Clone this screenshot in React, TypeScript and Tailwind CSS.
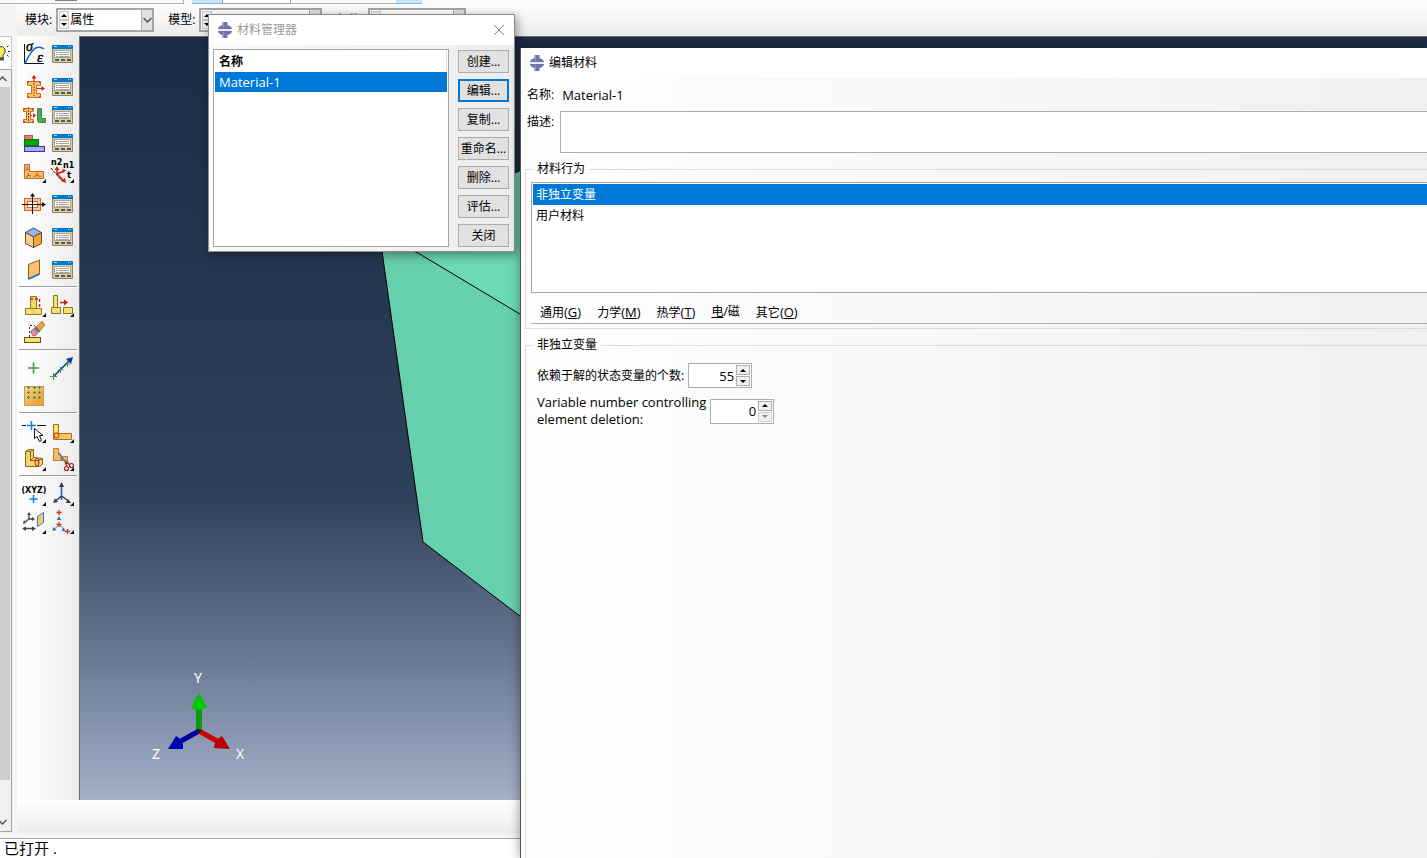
import React, { useState } from "react";

const BLUE = "#0d6cc8";

const Corner = () => <path d="M26 22v4h-4z" fill="#111" />;

const TableIcon = () => (
  <svg width="28" height="28" viewBox="0 0 28 28">
    <rect x="4" y="5" width="21" height="18" rx="1" fill="#8c8468" />
    <rect x="5" y="9" width="19" height="13" fill="#d6cfae" />
    <path d="M5 5h19l1 1v3H4V6z" fill="#0078d0" />
    <path d="M6 6.500h3M20 6.500h1M22 6.500h1" stroke="#b5dcf5" />
    <rect x="6.500" y="10.500" width="16" height="7" fill="#fbfbf8" stroke="#a9a284" />
    <path d="M8 12.500h2M11 12.500h10M8 14.500h2M11 14.500h10M8 16.500h2M11 16.500h10" stroke="#8a8a8a" strokeWidth=".8" />
    <path d="M7 20h4M13 20h4M19 20h4" stroke="#5d5848" strokeWidth="2" />
  </svg>
);

const StressStrain = () => (
  <svg width="28" height="28" viewBox="0 0 28 28">
    <path d="M4.500 4v19.500H24" fill="none" stroke="#111" />
    <path d="M5 23C9 17 11 9 17 7.500Q21 6.500 24 9" fill="none" stroke={BLUE} strokeWidth="1.500" />
    <text x="6" y="11" fontSize="14" fontStyle="italic" fontFamily="Liberation Serif, serif" stroke="#000" strokeWidth=".4">σ</text>
    <text x="17" y="22" fontSize="15" fontStyle="italic" fontFamily="Liberation Serif, serif" stroke="#000" strokeWidth=".4">ε</text>
  </svg>
);

const Profile = () => (
  <svg width="28" height="28" viewBox="0 0 28 28">
    <path d="M7.500 8.500h13v4h-4v8h4v4h-13v-4h4v-8h-4z" fill="#fcc45e" stroke="#b87428" />
    <path d="M14 7v16" stroke="#d81e05" strokeDasharray="2 1" />
    <path d="M14 3v4M17 15.500h6" stroke="#d81e05" />
    <path d="M14 2l2.500 3.500h-5zM25 15.500l-3.500-2.500v5z" fill="#d81e05" />
    <path d="M7 8h2v2H7zM19 8h2v2h-2zM7 23h2v2H7zM19 23h2v2h-2z" fill="#d84a20" />
  </svg>
);

const ProfileL = () => (
  <svg width="28" height="28" viewBox="0 0 28 28">
    <path d="M3.500 7.500h10v3h-3v8h3v3h-10v-3h3v-8h-3z" fill="#fcc45e" stroke="#b87428" />
    <path d="M8.500 6v16M10 14.500h4" stroke="#d81e05" strokeDasharray="2 1" />
    <path d="M16 14.500l-3-2.500v5z" fill="#d81e05" />
    <path d="M3 7h2v2H3zM12 7h2v2h-2zM3 20h2v2H3zM12 20h2v2h-2z" fill="#d84a20" />
    <path d="M17.500 7.500h4v10h4v4h-6q-2 0-2-2z" fill="#4fa858" stroke="#3a8a46" />
  </svg>
);

const Layers = () => (
  <svg width="28" height="28" viewBox="0 0 28 28">
    <rect x="4.500" y="6.500" width="8" height="4" fill="#e8806c" stroke="#b85648" />
    <rect x="4.500" y="10.500" width="14" height="6" fill="#00a800" stroke="#087808" />
    <rect x="4.500" y="17.500" width="20" height="5" fill="#a8a8ff" stroke="#38388c" />
  </svg>
);

const Orientation = () => (
  <svg width="28" height="28" viewBox="0 0 28 28">
    <path d="M4.500 7.500h5v7h14v7h-19z" fill="#fcb960" stroke="#a87430" />
    <path d="M7 9v3l-2 2M7 12l2 1M8 16v3l-2 1M8 18l3 1M17 15.500v3l-3 1M17 18.500l4 1" fill="none" stroke="#d83010" strokeWidth=".8" />
    <Corner />
  </svg>
);

const Normals = () => (
  <svg width="28" height="28" viewBox="0 0 28 28">
    <path d="M3 11l11 13" stroke="#111" strokeDasharray="3 1" />
    <path d="M9 17v-5M9 17l7-3M9 17l7 7" stroke="#d81e05" strokeWidth="1.500" />
    <path d="M9 9l2.500 4h-5zM18 13l-4-1 1.500 4zM18 26l-1-5-4 3z" fill="#d81e05" />
    <text x="3" y="8" fontSize="8" fontWeight="bold" fontFamily="DejaVu Sans, sans-serif">n2</text>
    <text x="15" y="11" fontSize="8" fontWeight="bold" fontFamily="DejaVu Sans, sans-serif">n1</text>
    <text x="19" y="21" fontSize="9" fontWeight="bold" fontFamily="DejaVu Sans, sans-serif">t</text>
    <Corner />
  </svg>
);

const Skin = () => (
  <svg width="28" height="28" viewBox="0 0 28 28">
    <rect x="4.500" y="8.500" width="16" height="12" fill="#fbc8a0" stroke="#e06030" />
    <rect x="7.500" y="11.500" width="10" height="6" fill="#fff" stroke="#e06030" />
    <path d="M2 14.500h22M12.500 4v20" stroke="#111" />
    <path d="M12.500 3l2.500 3.500h-5zM26 14.500l-4-2.500v5z" fill="#111" />
  </svg>
);

const Cube = () => (
  <svg width="28" height="28" viewBox="0 0 28 28" strokeLinejoin="round" stroke="#6b4a20">
    <path d="M13.500 5l8 4.500-8 4.500-8-4.500z" fill="#94b4f0" stroke="#3c4c78" />
    <path d="M5.500 9.500l8 4.500v10.500l-8-4z" fill="#fcd088" />
    <path d="M21.500 9.500l-8 4.500v10.500l8-4z" fill="#f0a840" />
  </svg>
);

const Shell = () => (
  <svg width="28" height="28" viewBox="0 0 28 28">
    <path d="M8.500 8.500l11-4.500v14l-11 5z" fill="#fcc068" stroke="#8a5a20" />
    <path d="M8.500 23l11-5" stroke="#0078e0" strokeWidth="1.500" />
  </svg>
);

const Feature = () => (
  <svg width="28" height="28" viewBox="0 0 28 28">
    <path d="M10.500 5.500h6v12h5v6h-16v-6h5z" fill="#fbe070" stroke="#8a7830" />
    <path d="M11 6h5v17h-5z" fill="#f3cf58" opacity=".6" />
    <path d="M10 8h10M19.500 8v10" stroke="#d81e05" strokeWidth="1.500" strokeDasharray="3 2" />
    <path d="M6 17.500h15" stroke="#8a7830" />
    <Corner />
  </svg>
);

const MoveFeature = () => (
  <svg width="28" height="28" viewBox="0 0 28 28">
    <path d="M5.500 4.500h4v12h3v6h-9v-6h2z" fill="#fbe070" stroke="#8a7830" />
    <path d="M4 16.500h8" stroke="#8a7830" />
    <path d="M15.500 16.500h9v6h-9z" fill="#fbe070" stroke="#8a7830" />
    <path d="M12 11.500h5" stroke="#d81e05" strokeWidth="1.500" />
    <path d="M20 11.500l-4-3v6z" fill="#d81e05" />
    <Corner />
  </svg>
);

const Eraser = () => (
  <svg width="28" height="28" viewBox="0 0 28 28">
    <rect x="4.500" y="18.500" width="16" height="5" fill="#fbe070" stroke="#5e5020" />
    <path d="M9.500 18V6.500H15" fill="none" stroke="#222" strokeDasharray="2 2" />
    <path d="M16 8l6-6 3 4-6 7z" fill="#f0a040" stroke="#a86820" strokeWidth=".7" />
    <path d="M14 9l2-2 4 5-2 2z" fill="#66707e" />
    <path d="M11 12l3-2.500 3.500 5L15 17q-4 0-4-5z" fill="#e88ca0" stroke="#804858" strokeWidth=".7" />
  </svg>
);

const PlusPoint = () => (
  <svg width="28" height="28" viewBox="0 0 28 28">
    <path d="M13.500 8.500v11M8 14h11" stroke="#3a9c40" strokeWidth="1.500" />
  </svg>
);

const DatumAxis = () => (
  <svg width="28" height="28" viewBox="0 0 28 28">
    <path d="M5.500 22.500L21 7" stroke="#0838a0" strokeWidth="1.600" />
    <path d="M25 3l-2 7-5-5z" fill="#0838a0" />
    <path d="M5.500 19v7M2 22.500h7M12.500 13v6M9.500 16h6M19.500 7v6M16.500 10h6" stroke="#3a9c40" />
  </svg>
);

const PointGrid = () => (
  <svg width="28" height="28" viewBox="0 0 28 28">
    <defs>
      <linearGradient id="grid-face" x1="0" y1="0" x2="1" y2="1">
        <stop offset="0" stopColor="#fbd08c" />
        <stop offset="1" stopColor="#ec9a28" />
      </linearGradient>
    </defs>
    <rect x="4.500" y="4.500" width="19" height="19" fill="url(#grid-face)" stroke="#c89858" />
    {[5.500, 10.500, 15.500].map((y) =>
      [8.500, 14.500, 19.500].map((x) => (
        <path key={`${x}-${y}`} d={`M${x - 1.5} ${y}h3M${x} ${y - 1.5}v3`} stroke="#3a9c40" />
      ))
    )}
  </svg>
);

const Partition = () => (
  <svg width="28" height="28" viewBox="0 0 28 28">
    <path d="M2 8.500h4M17 8.500h9" stroke="#111" />
    <path d="M11.500 4v9M7 8.500h9" stroke="#1080e0" strokeWidth="1.500" />
    <path d="M14.500 11.500v10l2.500-2 2.500 5 2-1-2-5h3.500z" fill="#fff" stroke="#111" />
    <Corner />
  </svg>
);

const PartitionL = () => (
  <svg width="28" height="28" viewBox="0 0 28 28">
    <path d="M5.500 7.500h5v9h13v6h-18z" fill="#fcc45e" stroke="#a07028" />
    <path d="M6 8h4v7H6z" fill="#f8e070" />
    <circle cx="8.500" cy="18.500" r="2.500" fill="none" stroke="#d81e05" />
    <Corner />
  </svg>
);

const CellL = () => (
  <svg width="28" height="28" viewBox="0 0 28 28">
    <path d="M5.500 6.500l3-2h5v8l9 1v6l-3 2h-14z" fill="#f4d468" stroke="#846a20" />
    <path d="M5.500 6.500h5v9h8v6M10.500 6.500l3-2M10.500 15.500l3-3M18.500 15.500l4-2" fill="none" stroke="#846a20" />
    <ellipse cx="17" cy="17" rx="2" ry="4" fill="none" stroke="#d81e05" />
    <Corner />
  </svg>
);

const Cut = () => (
  <svg width="28" height="28" viewBox="0 0 28 28">
    <path d="M5.500 3.500h5v6l4 2h5v4h-14z" fill="#fcb960" stroke="#b08040" />
    <path d="M11 8l8 11M12 13l9 5" stroke="#777" strokeWidth="1.500" />
    <circle cx="18.500" cy="23.500" r="2" fill="none" stroke="#a81818" strokeWidth="1.200" />
    <circle cx="23.500" cy="20.500" r="2" fill="none" stroke="#a81818" strokeWidth="1.200" />
    <path d="M17 17l2 4M18 18l4 1.500" stroke="#a81818" strokeWidth="1.200" />
    <Corner />
  </svg>
);

const XyzPoint = () => (
  <svg width="28" height="28" viewBox="0 0 28 28">
    <text x="14" y="13" fontSize="8" fontWeight="bold" textAnchor="middle" fontFamily="DejaVu Sans, sans-serif">(XYZ)</text>
    <path d="M13.500 15v8M9.500 19h8" stroke="#1080e0" strokeWidth="1.500" />
    <Corner />
  </svg>
);

const Csys = () => (
  <svg width="28" height="28" viewBox="0 0 28 28">
    <path d="M13.500 20V5" stroke="#1060b8" strokeWidth="1.500" />
    <path d="M13.500 16l-6 5M13.500 16l7 5" stroke="#333" strokeWidth="1.300" />
    <path d="M13.500 2l2.500 5h-5zM5 23l2-4.500 3 3.500zM23 23h-5l2-4z" fill="#334" />
    <Corner />
  </svg>
);

const CsysPlane = () => (
  <svg width="28" height="28" viewBox="0 0 28 28">
    <path d="M9 11V6M9 11l-4 3M9 11h4M4 20.500h10" stroke="#444" strokeWidth="1.300" />
    <path d="M9 4l2 3H7zM3 16l1-4 2 3zM15 11l-3 2V9zM2 20.500l4-2v4.500zM16 20.500l-4-2v4.500z" fill="#444" />
    <path d="M17.500 8.500l6-4v10l-6 4z" fill="#f8c870" stroke="#2880c8" />
    <Corner />
  </svg>
);

const CsysPoints = () => (
  <svg width="28" height="28" viewBox="0 0 28 28">
    <path d="M8.500 4.500h5M11 2v5M8.500 16.500h5M11 14v5M17 23.500h5M19.500 21v5" stroke="#e03018" strokeWidth="1.300" />
    <path d="M11 8l2 4H9zM4.500 23l1-4 3 3zM17.500 23h-4l2-3.500z" fill="#1070c8" />
    <path d="M10 18l-4 3M12 18l4 3" stroke="#1070c8" strokeDasharray="2 1" />
    <Corner />
  </svg>
);

type Tool = { label: string; Icon: () => React.JSX.Element };

const manager = (label: string): Tool => ({ label, Icon: TableIcon });

// sections are split by a rule, groups inside one by a small gap
const sections: Tool[][][] = [
  [
    [{ label: "创建材料", Icon: StressStrain }, manager("材料管理器")],
    [
      { label: "创建剖面", Icon: Profile }, manager("剖面管理器"),
      { label: "创建截面", Icon: ProfileL }, manager("截面管理器"),
      { label: "创建复合层", Icon: Layers }, manager("复合层管理器"),
      { label: "指派材料方向", Icon: Orientation }, { label: "指派梁方向", Icon: Normals },
    ],
    [{ label: "创建惯量", Icon: Skin }, manager("惯量管理器")],
    [{ label: "创建蒙皮", Icon: Cube }, manager("蒙皮管理器")],
    [{ label: "创建纵梁", Icon: Shell }, manager("纵梁管理器")],
  ],
  [[
    { label: "编辑特征", Icon: Feature }, { label: "重新生成", Icon: MoveFeature },
    { label: "删除特征", Icon: Eraser },
  ]],
  [[
    { label: "基准点", Icon: PlusPoint }, { label: "基准轴", Icon: DatumAxis },
    { label: "基准面", Icon: PointGrid },
  ]],
  [[
    { label: "拆分边", Icon: Partition }, { label: "拆分面", Icon: PartitionL },
    { label: "拆分几何元素", Icon: CellL }, { label: "裁剪", Icon: Cut },
  ]],
  [[
    { label: "坐标点", Icon: XyzPoint }, { label: "坐标系", Icon: Csys },
    { label: "偏移平面", Icon: CsysPlane }, { label: "三点坐标系", Icon: CsysPoints },
  ]],
];

const AppLogo = () => (
  <svg width="16" height="16" viewBox="0 0 16 16" className="shrink-0">
    <path d="M5.500 0h5v3q4 1 4.500 4H1q.5-3 4.500-4z" fill="#7272ae" />
    <path d="M1 9h14q-.5 3-4.500 4v3h-5v-3Q1.500 12 1 9z" fill="#7272ae" />
    <path d="M1 8h14" stroke="#e4e4f2" strokeWidth="1.500" />
    <path d="M6.500 0v6M6.500 10v6" stroke="#9494c4" />
  </svg>
);

const Arrow = ({ up = false }: { up?: boolean }) => (
  <svg width="6" height="3" viewBox="0 0 6 3">
    <path d={up ? "M0 3h6L3 0z" : "M0 0h6L3 3z"} fill="currentColor" />
  </svg>
);

const Chevron = ({ up = false }: { up?: boolean }) => (
  <svg width="9" height="6" viewBox="0 0 9 6">
    <path d={up ? "M.5 5l4-4 4 4" : "M.5 1l4 4 4-4"} fill="none" stroke="#555" strokeWidth="1.500" />
  </svg>
);

const ContextBox = ({ id, label, value, className }: { id: string; label: string; value: string; className: string }) => (
  <div className="flex items-center gap-1">
    <label htmlFor={id}>{label}:</label>
    <div className={`flex h-6 border-2 border-[#a5a5a5] bg-white ${className}`}>
      <div className="flex flex-col w-[10px] shrink-0 my-px ml-px">
        <button aria-label={`${label}上一项`} className="flex flex-1 items-center justify-center border border-[#c8c8c8] bg-[#f2f2f2]"><Arrow up /></button>
        <button aria-label={`${label}下一项`} className="flex flex-1 items-center justify-center border border-[#c8c8c8] bg-[#f2f2f2]"><Arrow /></button>
      </div>
      <div className="relative flex-1">
        <select id={id} className="w-full h-full appearance-none bg-transparent pl-px pr-3 outline-none">
          <option>{value}</option>
        </select>
        <span className="pointer-events-none absolute inset-y-0 right-0 w-[11px] flex items-center justify-center border-l border-[#adadad] bg-[#e1e1e1]">
          <Chevron />
        </span>
      </div>
    </div>
  </div>
);

const Spinner = ({ id, value, onChange }: { id: string; value: number; onChange: (n: number) => void }) => (
  <div className="flex w-16 h-[25px] border border-[#adadad] bg-white p-px">
    <input
      id={id}
      value={value}
      onChange={(e) => onChange(Number(e.target.value) || 0)}
      className="w-0 flex-1 bg-transparent text-right text-[13px] pr-0.5 outline-none"
    />
    <div className="flex flex-col w-[14px] gap-px">
      <button aria-label="增加" onClick={() => onChange(value + 1)} className="flex flex-1 items-center justify-center border border-[#adadad] bg-[#f0f0f0]">
        <Arrow up />
      </button>
      <button
        aria-label="减少"
        disabled={value === 0}
        onClick={() => onChange(value - 1)}
        className="flex flex-1 items-center justify-center border border-[#adadad] bg-[#f0f0f0] disabled:border-[#d0d0d0] disabled:text-[#888]"
      >
        <Arrow />
      </button>
    </div>
  </div>
);

const Viewport = () => (
  <main className="flex-1 min-w-0 overflow-hidden border-l border-t border-[#6e6e6e] bg-linear-to-b from-[#1c2c46] via-[#2f405a] via-60% to-[#a3b0c8]">
    <svg className="block w-full h-full" role="img" aria-label="模型视图">
      <path d="M300 200L343 505 640 732V120L434 139z" fill="#66cfac" stroke="#000" />
      <path d="M300 200L338 216 640 397V60L441 133z" fill="#6bd9b4" stroke="#000" />
      <g fontFamily="Noto Sans, sans-serif" fontSize="14" fill="#fff">
        <text x="114" y="646">Y</text>
        <text x="72" y="722">Z</text>
        <text x="156" y="722">X</text>
      </g>
      <path d="M119 693V670" stroke="#0a9a0a" strokeWidth="6" />
      <path d="M119 656l8 14q-8 6-16 0z" fill="#00c800" />
      <path d="M119 694l-18 10" stroke="#0000a8" strokeWidth="5" />
      <path d="M88 712l8-13q8 4 7 13z" fill="#0000b8" />
      <path d="M119 694l18 10" stroke="#d00000" strokeWidth="5" />
      <path d="M150 712l-8-13q-8 4-8 12z" fill="#b80000" />
      <circle cx="119" cy="694" r="2" fill="#102030" />
    </svg>
  </main>
);

const actions = ["创建...", "编辑...", "复制...", "重命名...", "删除...", "评估...", "关闭"];

const MaterialManager = () => (
  <section aria-label="材料管理器" className="absolute left-[208px] top-[14px] w-[307px] border border-[#8c8c8c] bg-linear-to-r from-[#fafafa] to-[#ededed] shadow-[2px_3px_10px_rgba(0,0,0,0.4)]">
    <header className="flex items-center gap-1 h-[30px] bg-white pl-2 pr-[9px] text-[#999]">
      <AppLogo />
      <h2 className="flex-1">材料管理器</h2>
      <button aria-label="关闭窗口">
        <svg width="12" height="12" viewBox="0 0 12 12"><path d="M1 1l10 10M11 1L1 11" stroke="#888" /></svg>
      </button>
    </header>
    <div className="flex gap-[9px] pl-1 pr-[5px] pt-1 pb-1">
      <div className="flex-1 border border-[#a5a5a8] bg-white p-px">
        <table className="w-full border-collapse text-left">
          <thead>
            <tr><th className="h-[21px] pl-1 border-r border-[#dcdcdc] font-bold">名称</th></tr>
          </thead>
          <tbody>
            <tr className="bg-[#0078d7] text-white"><td className="h-5 pl-1 text-[13px] leading-5">Material-1</td></tr>
          </tbody>
        </table>
      </div>
      <div className="flex flex-col gap-1.5 pt-px">
        {actions.map((a) => (
          <button
            key={a}
            className={a === "编辑..."
              ? "w-[51px] h-[23px] border-2 border-[#0078d7] bg-[#e1e1e1] whitespace-nowrap"
              : "w-[51px] h-[23px] border border-[#adadad] bg-[#e1e1e1] whitespace-nowrap"}
          >
            {a}
          </button>
        ))}
      </div>
    </div>
  </section>
);

const menus = [
  { name: "通用", key: "G" },
  { name: "力学", key: "M" },
  { name: "热学", key: "T" },
  { name: "电/磁", key: "" },
  { name: "其它", key: "O" },
];

const EditMaterial = () => {
  const [depvar, setDepvar] = useState(55);
  const [deletion, setDeletion] = useState(0);

  return (
    <section aria-label="编辑材料" className="absolute left-[520px] top-12 right-0 bottom-0 overflow-hidden border-l border-[#555] bg-linear-to-r from-[#fefefe] to-[#f0f0f0] shadow-[0_0_10px_rgba(0,0,0,0.4)]">
      <header className="flex items-center gap-1 h-[30px] bg-white pl-2">
        <AppLogo />
        <h2>编辑材料</h2>
      </header>
      <div className="flex flex-col pl-1">
        <div className="flex items-center gap-2 h-[33px] pl-0.5">
          <span>名称:</span>
          <span className="text-[13px]">Material-1</span>
        </div>
        <div className="flex gap-1.5 pl-0.5">
          <label htmlFor="description" className="pt-[3px]">描述:</label>
          <textarea id="description" className="flex-1 h-[42px] resize-none border border-r-0 border-[#adadad] bg-white outline-none" />
        </div>

        <fieldset className="mt-[7px] min-w-0 border border-r-0 border-[#dcdcdc] pl-[5px] pb-1">
          <legend className="ml-0.5 px-1 leading-[18px]">材料行为</legend>
          <ul className="mt-1 h-[111px] border border-r-0 border-[#a5a5a8] bg-white pl-px pt-px">
            <li className="h-[21px] leading-[21px] bg-[#0078d7] pl-[3px] text-white">非独立变量</li>
            <li className="h-[21px] leading-[21px] pl-[3px]">用户材料</li>
          </ul>
          <nav className="flex gap-4 mt-1 h-[27px] items-center border-b border-[#adadad] pl-[9px] pt-1">
            {menus.map((m) => (
              <button key={m.name}>
                {m.key ? <>{m.name}<span className="text-[13px]">(<u>{m.key}</u>)</span></> : <><u>电</u>/磁</>}
              </button>
            ))}
          </nav>
        </fieldset>

        <fieldset className="mt-[7px] h-[600px] min-w-0 border border-r-0 border-[#dcdcdc] pl-[11px]">
          <legend className="-ml-1 px-1 leading-[18px]">非独立变量</legend>
          <div className="flex items-center gap-1 mt-[9px]">
            <label htmlFor="depvar">依赖于解的状态变量的个数:</label>
            <Spinner id="depvar" value={depvar} onChange={setDepvar} />
          </div>
          <div className="flex items-center gap-1 mt-[6px]">
            <label htmlFor="deletion" className="text-[13px] leading-[17px] font-['Open_Sans',sans-serif]">
              Variable number controlling<br />element deletion:
            </label>
            <Spinner id="deletion" value={deletion} onChange={setDeletion} />
          </div>
        </fieldset>
      </div>
    </section>
  );
};

const App = () => (
  <div className="relative flex flex-col h-screen overflow-hidden bg-[#f4f4f4] text-black text-[12px] leading-4 font-['Open_Sans','Noto_Sans_CJK_SC',sans-serif]">
    {/* bottom edge of the toolbar above */}
    <div className="flex h-1 shrink-0 bg-[#fafafa]">
      <div className="w-[184px] border-b border-r border-[#b4b4b4] pl-[55px]"><div className="w-[22px] h-px bg-[#8a7a6c]" /></div>
      <div className="ml-2 w-[30px] border-b border-[#80b8e8] bg-[#cce4f7]" />
      <div className="w-[69px] border-b border-x border-[#a5a5a5] bg-white" />
      <div className="w-[105px] border-b border-[#b4b4b4]" />
      <div className="w-[26px] border-b border-[#80b8e8] bg-[#cce4f7]" />
    </div>

    <div className="flex flex-1 min-h-0">
      <aside className="flex flex-col w-[17px] shrink-0 pr-[5px] pt-8 pb-[6px]">
        <div className="h-[33px] border-r border-t border-[#c8c8c8] bg-[#fdfdfd] overflow-hidden">
          <svg width="11" height="32" viewBox="0 0 11 32">
            <path d="M-1 10q4-2 6 2 1 4-2 6v3h-5z" fill="#f8f060" stroke="#333" />
            <path d="M-1 20.500h5v3h-5z" fill="#555" />
            <path d="M7 10l1.500-1.500M8 14.500h2M7 18l1.500 1.500" stroke="#222" />
          </svg>
        </div>
        <div className="flex flex-1 flex-col items-start border-r border-y border-[#a5a5a5] bg-[#f0f0f0] overflow-hidden">
          <span className="flex h-[17px] w-[10px] -ml-0.5 items-center shrink-0"><Chevron up /></span>
          <span className="flex-1 w-[10px] bg-[#cdcdcd]" />
          <span className="flex h-[51px] w-[10px] -ml-0.5 items-end pb-1.5 shrink-0"><Chevron /></span>
        </div>
      </aside>

      <div className="flex flex-1 min-w-0 flex-col">
        <div className="flex h-8 shrink-0 items-center gap-[14px] pl-2 bg-linear-to-b from-[#fdfdfd] to-[#ececec]">
          <ContextBox id="module" label="模块" value="属性" className="w-[98px]" />
          <ContextBox id="model" label="模型" value="Model-1" className="w-[123px]" />
          <ContextBox id="part" label="部件" value="Part-1" className="w-[98px]" />
        </div>
        <div className="flex flex-1 min-h-0">
          <div className="flex flex-col w-[62px] shrink-0 pt-1 pl-[2px] pr-[2px] bg-linear-to-r from-white to-[#ececec]">
            {sections.map((groups, i) => (
              <div key={i} className="flex flex-col gap-[5px] pb-[2px]">
                {i > 0 && <hr className="-mb-0.5 h-[2px] border-0 border-t border-[#9c9c9c] bg-white" />}
                {groups.map((tools, j) => (
                  <div key={j} className="grid grid-cols-[28px_28px] pl-px">
                    {tools.map(({ label, Icon }) => (
                      <button key={label} aria-label={label} className="w-7 h-7"><Icon /></button>
                    ))}
                  </div>
                ))}
              </div>
            ))}
          </div>
          <Viewport />
        </div>
        <div className="h-[33px] shrink-0 bg-linear-to-b from-white to-[#ececec]" />
        <div className="h-[5px] shrink-0" />
      </div>
    </div>

    <footer className="h-5 shrink-0 border-t border-[#a5a5a5] bg-white pl-1 text-[15px] leading-[18px]">已打开 .</footer>

    <MaterialManager />
    <EditMaterial />
  </div>
);

export default App;
